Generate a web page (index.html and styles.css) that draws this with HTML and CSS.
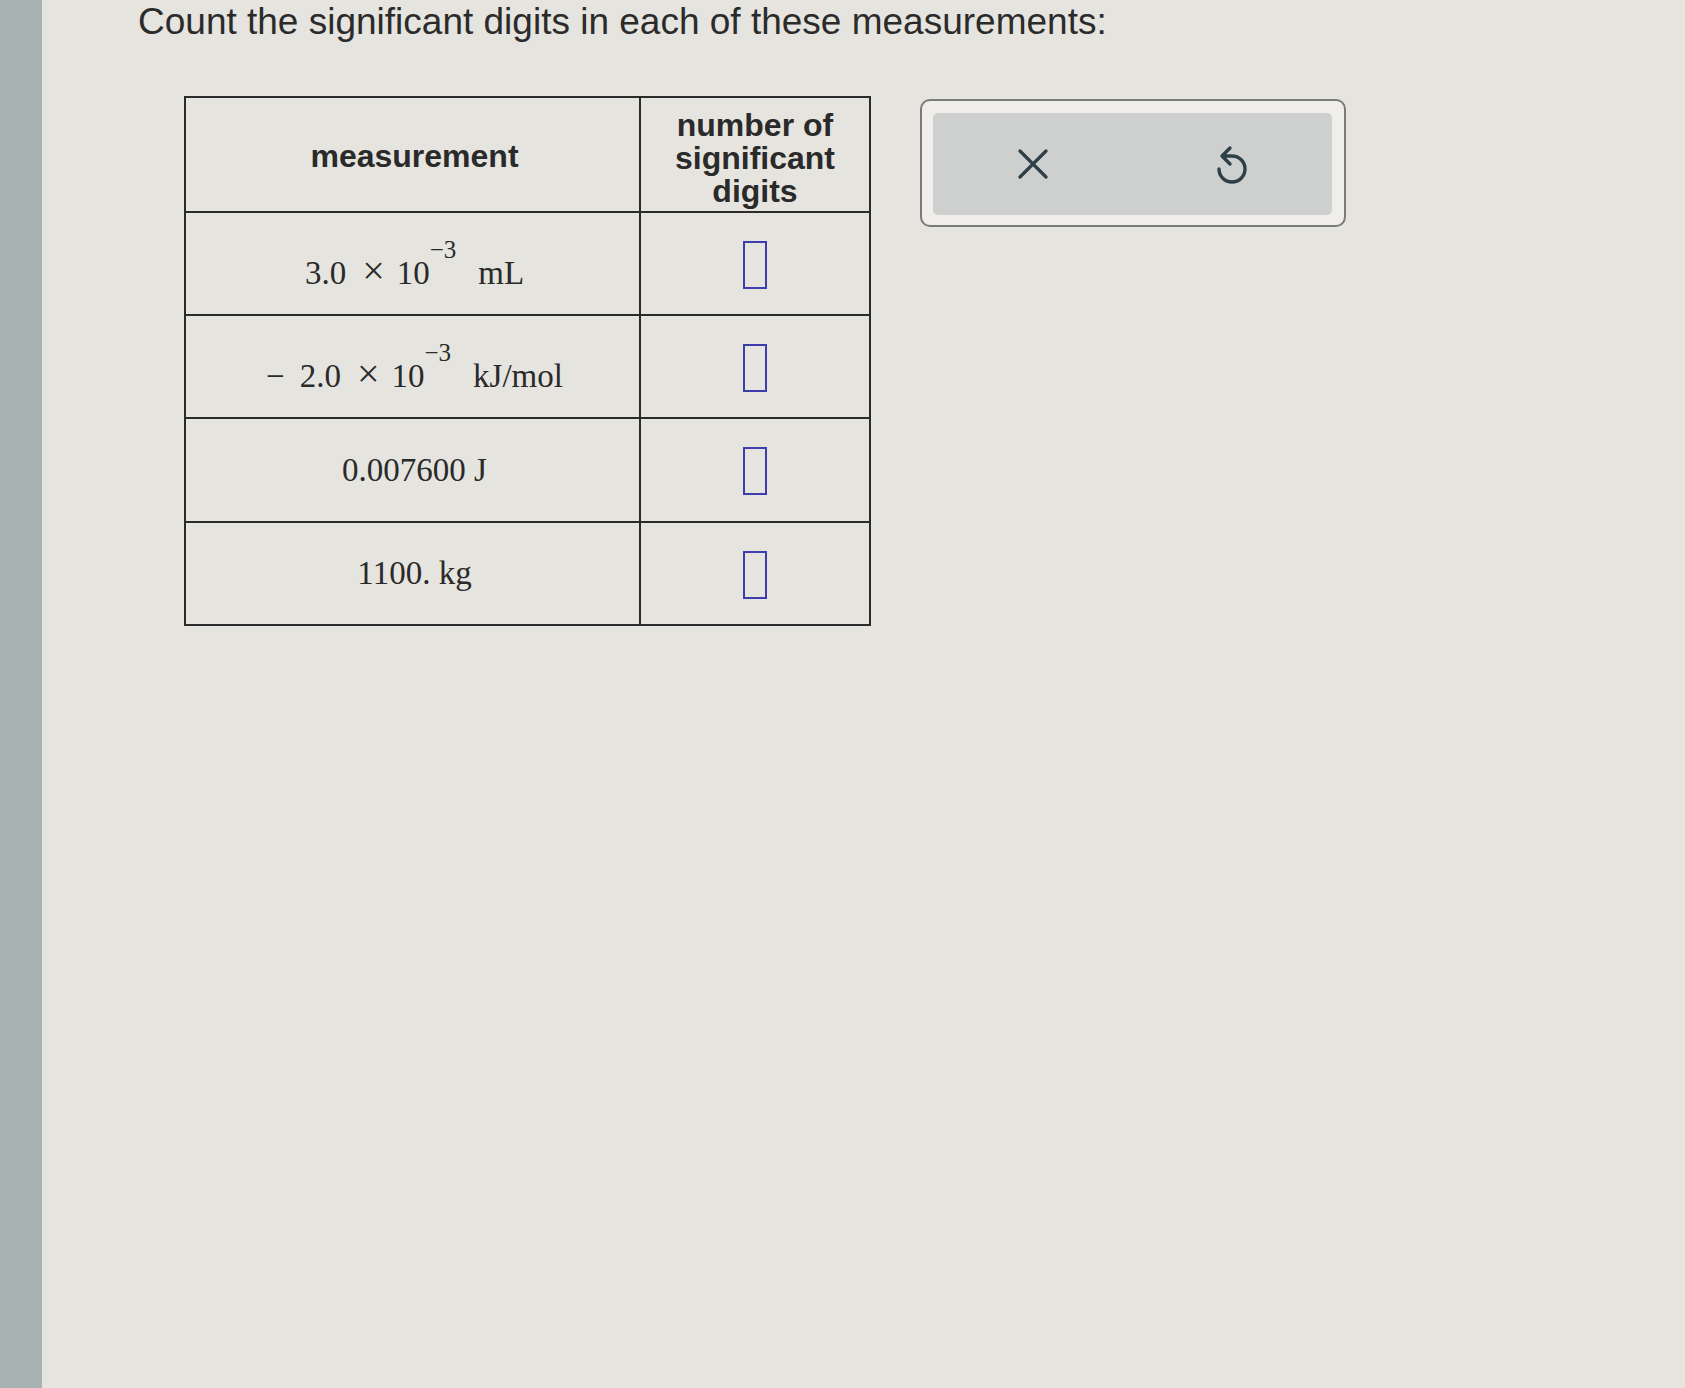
FILE: index.html
```html
<!DOCTYPE html>
<html lang="en">
<head>
<meta charset="utf-8">
<title>Significant digits</title>
<link rel="stylesheet" href="styles.css">
</head>
<body>
<div class="page">
  <div class="strip"></div>
  <main class="content">
    <h1 class="title">Count the significant digits in each of these measurements:</h1>
    <div class="workarea">
      <div class="grid">
        <div class="cell head c1">measurement</div>
        <div class="cell head c2">number of<br>significant<br>digits</div>

        <div class="cell val c1"><span class="math"><span>3.0</span><span class="mo">×</span><span>10</span><span class="sup">−3</span><span class="unit">mL</span></span></div>
        <div class="cell ans c2"><span class="box"></span></div>

        <div class="cell val c1"><span class="math"><span class="neg">−</span><span>2.0</span><span class="mo">×</span><span>10</span><span class="sup">−3</span><span class="unit">kJ/mol</span></span></div>
        <div class="cell ans c2"><span class="box"></span></div>

        <div class="cell val c1"><span class="math">0.007600 J</span></div>
        <div class="cell ans c2"><span class="box"></span></div>

        <div class="cell val c1 last"><span class="math">1100. kg</span></div>
        <div class="cell ans c2 last"><span class="box"></span></div>
      </div>

      <div class="tools">
        <div class="tools-inner">
          <button class="tool" aria-label="Clear">
            <svg width="30" height="30" viewBox="0 0 30 30"><path d="M2 2 L28 28 M28 2 L2 28" fill="none" stroke="#2f3f48" stroke-width="3.2" stroke-linecap="round"/></svg>
          </button>
          <button class="tool" aria-label="Undo">
            <svg width="32" height="40" viewBox="0 0 32 40"><path d="M3 25 A13 13 0 1 0 16 12 H7 M14 4 L6 12 L14 20" fill="none" stroke="#2f3f48" stroke-width="3.4" stroke-linecap="round" stroke-linejoin="round"/></svg>
          </button>
        </div>
      </div>
    </div>
  </main>
</div>
</body>
</html>
```

FILE: styles.css
```css
html, body {
  margin: 0;
  padding: 0;
  background: #e6e4df;
}

.page {
  display: flex;
  min-height: 1388px;
}

.strip {
  width: 42px;
  flex: none;
  background: #a8b2b2;
}

.content {
  flex: 1;
  padding: 2px 0 0 96px;
}

.title {
  margin: 0;
  font-family: "Liberation Sans", Arial, sans-serif;
  font-weight: 400;
  font-size: 37px;
  line-height: 40px;
  color: #2b2b2b;
}

.workarea {
  display: flex;
  align-items: flex-start;
  margin: 54px 0 0 46px;
}

.grid {
  display: grid;
  grid-template-columns: 455px 228px;
  grid-template-rows: 115px 103px 103px 104px 101px;
  border: 2px solid #2b2b2b;
  background: #e6e4df;
}

.cell {
  box-sizing: border-box;
  display: flex;
  align-items: center;
  justify-content: center;
  border-bottom: 2px solid #2b2b2b;
  color: #2a2a2a;
}

.cell.c1 {
  border-right: 2px solid #2b2b2b;
  padding-left: 4px;
}

.cell.last {
  border-bottom: none;
}

.head {
  font-family: "Liberation Sans", Arial, sans-serif;
  font-weight: 700;
  font-size: 32px;
  line-height: 33px;
  text-align: center;
  color: #2a2a2a;
}

.head.c2 {
  padding-top: 8px;
}

.head.c1 {
  padding-top: 4px;
}

.val {
  font-family: "Liberation Serif", "Times New Roman", serif;
  font-size: 33px;
}

.math {
  white-space: nowrap;
}

.mo {
  font-size: 40px;
  line-height: 1;
  margin: 0 12px 0 16px;
}

.neg {
  margin-right: 15px;
}

.sup {
  font-size: 25px;
  vertical-align: 26px;
}

.unit {
  margin-left: 22px;
}

.ans {
  padding-top: 2px;
}

.box {
  display: block;
  width: 24px;
  height: 48px;
  box-sizing: border-box;
  border: 2.5px solid #3d3db0;
}

.tools {
  margin: 3px 0 0 49px;
  width: 426px;
  height: 128px;
  box-sizing: border-box;
  border: 2px solid #7a7a7a;
  border-radius: 10px;
  background: #efeeea;
  padding: 12px 12px 10px 11px;
}

.tools-inner {
  display: flex;
  height: 100%;
  background: #cdd0cf;
  border-radius: 5px;
}

.tool {
  flex: 1;
  display: flex;
  align-items: center;
  justify-content: center;
  border: none;
  background: transparent;
  padding: 0;
  cursor: pointer;
}

.tool svg {
  display: block;
}
```
